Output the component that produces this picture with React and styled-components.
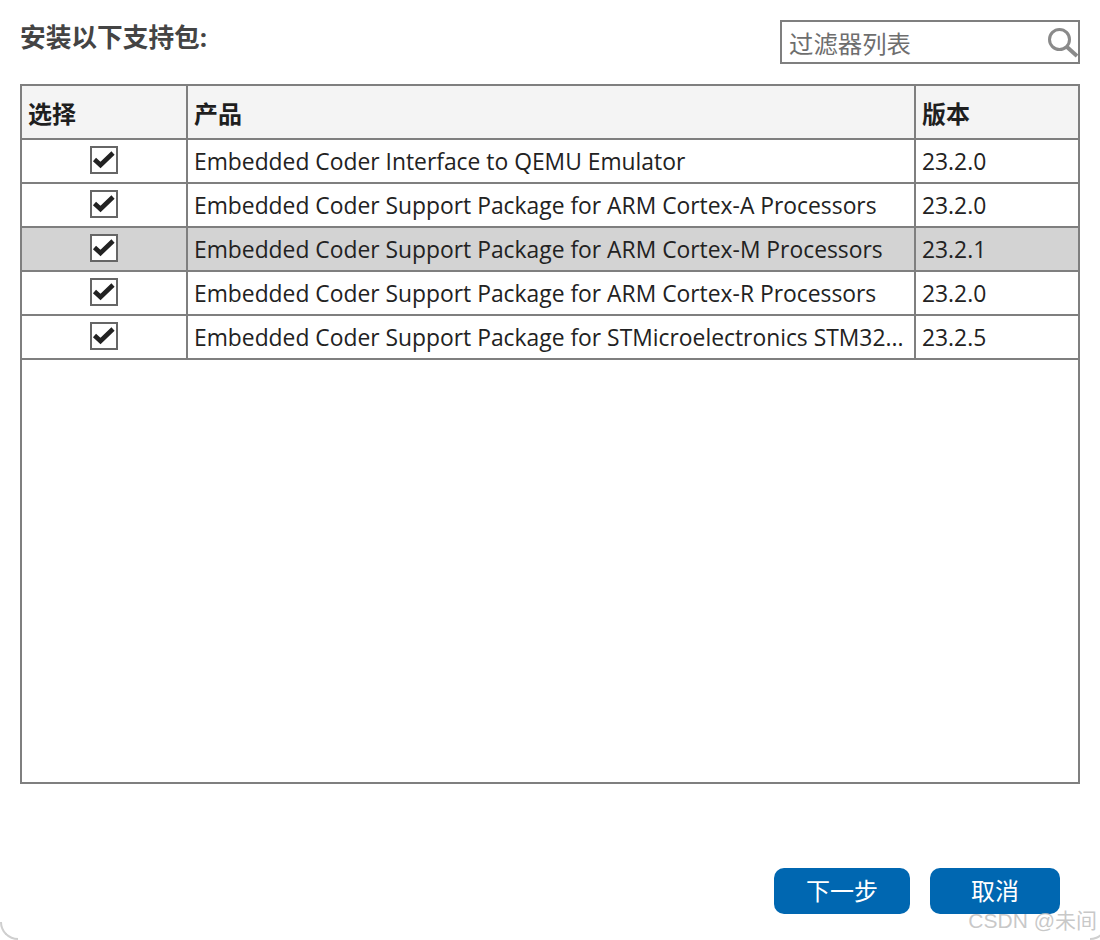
import React from 'react'
import styled, { createGlobalStyle } from 'styled-components'

const GlobalStyle = createGlobalStyle`
  html, body {
    margin: 0;
    padding: 0;
    background: #fff;
  }
  * { box-sizing: border-box; }
`

const FONT = `"Open Sans", "Noto Sans CJK SC", sans-serif`

const Page = styled.div`
  position: relative;
  width: 1100px;
  height: 940px;
  overflow: hidden;
  background: #fff;
  font-family: ${FONT};
  padding: 20px 20px 26px;
  display: flex;
  flex-direction: column;
`

const Top = styled.div`
  display: flex;
  justify-content: space-between;
  align-items: flex-start;
  height: 64px;
`

const Heading = styled.div`
  font-size: 25.7px;
  font-weight: 700;
  line-height: 35px;
  color: #444;
`

const Filter = styled.div`
  width: 300px;
  height: 44px;
  border: 2px solid #7f7f7f;
  display: flex;
  align-items: center;
  justify-content: space-between;
  padding: 0 0 0 7px;
  font-size: 24.4px;
  color: #6e6e6e;
`

const Table = styled.div`
  height: 700px;
  border: 2px solid #7f7f7f;
`

const Row = styled.div`
  display: grid;
  grid-template-columns: 164px 728px 1fr;
  height: ${({ $head }) => ($head ? '54px' : '44px')};
  border-bottom: 2px solid #7f7f7f;
  background: ${({ $head, $selected }) => ($head ? '#f4f4f4' : $selected ? '#d3d3d3' : '#fff')};
`

const Cell = styled.div`
  display: flex;
  align-items: center;
  min-width: 0;
  padding-left: ${({ $center }) => ($center ? '0' : '6px')};
  border-left: ${({ $first }) => ($first ? 'none' : '2px solid #7f7f7f')};
  font-size: 22.85px;
  color: #222;
  white-space: nowrap;
  justify-content: ${({ $center }) => ($center ? 'center' : 'flex-start')};
`

const HeadText = styled.span`
  font-size: 24px;
  font-weight: 700;
  color: #1f1f1f;
  padding-top: 1px;
`

const Box = styled.span`
  width: 28px;
  height: 28px;
  border: 2px solid #666;
  background: #fff;
  display: flex;
  align-items: center;
  justify-content: center;
  margin-bottom: 2px;
`

const Footer = styled.div`
  margin-top: 84px;
  display: flex;
  justify-content: flex-end;
  gap: 20px;
  padding-right: 20px;
`

const Button = styled.div`
  width: ${({ $w }) => $w}px;
  height: 46px;
  border-radius: 10px;
  background: #0067b1;
  color: #fff;
  font-size: 24px;
  padding-bottom: 4px;
  display: flex;
  align-items: center;
  justify-content: center;
`

const Watermark = styled.div`
  position: absolute;
  right: 3px;
  bottom: 4px;
  font-family: "Liberation Sans", "Noto Sans CJK SC", sans-serif;
  font-size: 21px;
  line-height: 30px;
  color: rgba(190, 190, 190, 0.85);
`

const Corner = styled.div`
  position: absolute;
  bottom: 0;
  ${({ $side, $offset }) => `${$side}: ${$offset}px;`}
  width: 18px;
  height: 18px;
  border-bottom: 2px solid #cfcfcf;
  border-${({ $side }) => $side}: 2px solid #cfcfcf;
  border-bottom-${({ $side }) => $side}-radius: 18px;
`

const rows = [
  ['Embedded Coder Interface to QEMU Emulator', '23.2.0'],
  ['Embedded Coder Support Package for ARM Cortex-A Processors', '23.2.0'],
  ['Embedded Coder Support Package for ARM Cortex-M Processors', '23.2.1', true],
  ['Embedded Coder Support Package for ARM Cortex-R Processors', '23.2.0'],
  ['Embedded Coder Support Package for STMicroelectronics STM32...', '23.2.5'],
]

const CheckMark = () => (
  <svg width="24" height="24" viewBox="0 0 24 24">
    <path d="M2.5 11.5 L8.5 17 L21 5" fill="none" stroke="#222" strokeWidth="4.6" />
  </svg>
)

const SearchIcon = () => (
  <svg width="32" height="32" viewBox="0 0 32 32">
    <circle cx="13.5" cy="13.5" r="10" fill="#fff" stroke="#8a8a8a" strokeWidth="3" />
    <path d="M21 21 L31 30" stroke="#8a8a8a" strokeWidth="4" />
  </svg>
)

export default function App() {
  return (
    <Page>
      <GlobalStyle />
      <Top>
        <Heading>安装以下支持包:</Heading>
        <Filter>
          过滤器列表
          <SearchIcon />
        </Filter>
      </Top>
      <Table>
        <Row $head>
          <Cell $first><HeadText>选择</HeadText></Cell>
          <Cell><HeadText>产品</HeadText></Cell>
          <Cell><HeadText>版本</HeadText></Cell>
        </Row>
        {rows.map(([name, version, selected]) => (
          <Row key={name} $selected={selected}>
            <Cell $first $center>
              <Box><CheckMark /></Box>
            </Cell>
            <Cell>{name}</Cell>
            <Cell>{version}</Cell>
          </Row>
        ))}
      </Table>
      <Footer>
        <Button $w={136}>下一步</Button>
        <Button $w={130}>取消</Button>
      </Footer>
      <Watermark>CSDN @未间</Watermark>
      <Corner $side="left" $offset={0} />
      <Corner $side="right" $offset={-8} />
    </Page>
  )
}
